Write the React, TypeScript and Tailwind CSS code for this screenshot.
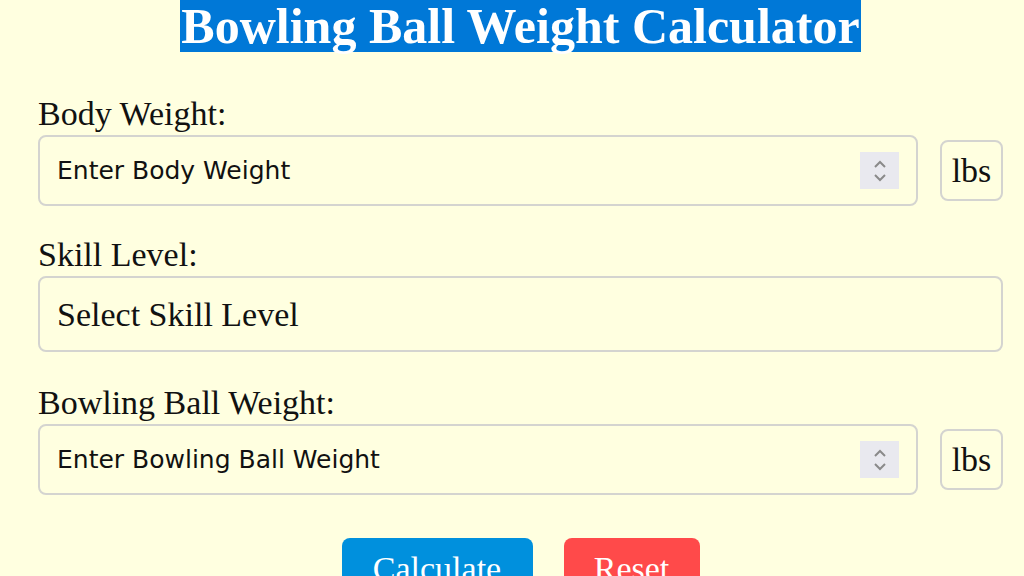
const NumberField = ({ placeholder }: { placeholder: string }) => {
  return (
    <div className="flex items-center gap-[22px]">
      <div className="flex h-[71px] flex-1 items-center rounded-[8px] border-2 border-[#d4d4d0] pl-[17px] pr-[17px]">
        <span className="flex-1 text-[25px] text-[#111] [font-family:'DejaVu_Sans',sans-serif]">
          {placeholder}
        </span>
        <div className="flex h-[37px] w-[39px] flex-col items-center justify-center bg-[#e9e9ef]">
          <svg width="14" height="26" viewBox="0 0 14 26" fill="none" stroke="#8a8a8a" strokeWidth="2">
            <path d="M2 9 L7 4 L12 9" />
            <path d="M2 17 L7 22 L12 17" />
          </svg>
        </div>
      </div>
      <div className="flex h-[61px] w-[63px] items-center justify-center rounded-[8px] border-2 border-[#d4d4d0] text-[34px] text-[#111]">
        lbs
      </div>
    </div>
  );
};

const App = () => {
  return (
    <div className="h-[576px] overflow-hidden bg-[#ffffe0] pl-[38px] pr-[21px] [font-family:'Liberation_Serif',serif]">
      <div className="flex justify-center">
        <h1 className="bg-[#0078d7] px-[1px] text-[50px] font-bold leading-[52px] text-white">
          Bowling Ball Weight Calculator
        </h1>
      </div>

      <div className="mt-[43px] text-[34px] leading-[38px] text-[#111]">Body Weight:</div>
      <div className="mt-[2px]">
        <NumberField placeholder="Enter Body Weight" />
      </div>

      <div className="mt-[30px] text-[34px] leading-[38px] text-[#111]">Skill Level:</div>
      <div className="mt-[2px] flex h-[76px] items-center rounded-[8px] border-2 border-[#d4d4d0] pl-[17px] text-[34px] text-[#111]">
        Select Skill Level
      </div>

      <div className="mt-[32px] text-[34px] leading-[38px] text-[#111]">Bowling Ball Weight:</div>
      <div className="mt-[2px]">
        <NumberField placeholder="Enter Bowling Ball Weight" />
      </div>

      <div className="mt-[43px] flex justify-center gap-[31px]">
        <button className="h-[60px] w-[191px] rounded-[8px] bg-[#0090dd] text-[34px] text-white">
          Calculate
        </button>
        <button className="h-[60px] w-[136px] rounded-[8px] bg-[#ff4a4a] text-[34px] text-white">
          Reset
        </button>
      </div>
    </div>
  );
};

export default App;
